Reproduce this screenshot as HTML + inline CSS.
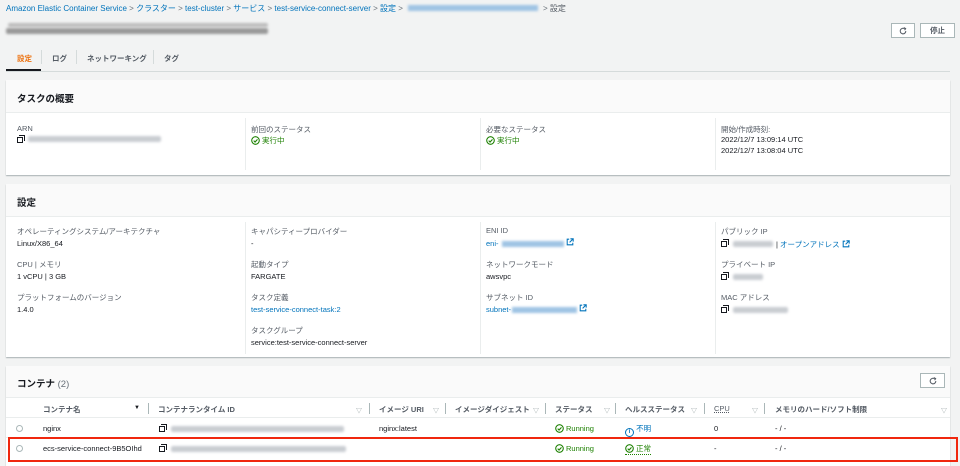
<!DOCTYPE html>
<html><head><meta charset="utf-8"><style>
*{margin:0;padding:0;box-sizing:border-box}
body{width:960px;height:464px;overflow:hidden;background:#f2f3f3;font-family:"Liberation Sans","Noto Sans CJK JP",sans-serif;font-size:7.5px;color:#16191f;position:relative}
.a{position:absolute;white-space:nowrap}
.lnk{color:#0073bb}
.lbl{color:#545b64}
.blur{position:absolute;height:6px;background:#c9cdd2;filter:blur(1.2px);border-radius:2px}
.blurb{position:absolute;height:6px;background:#9fc4e4;filter:blur(1.2px)}
.panel{position:absolute;left:6px;width:944px;background:#fff;box-shadow:0 1px 1px rgba(0,28,36,.3)}
.ph{position:absolute;left:0;top:0;width:100%;background:#fafafa;border-bottom:1px solid #eaeded}
.ph b{position:absolute;left:11px;font-size:9.5px}
.vl{position:absolute;width:1px;background:#eaeded}
.g{color:#1d8102}
.ok{display:inline-block;width:9px;height:9px;vertical-align:-2px;margin-right:2px}
.cp{display:inline-block;width:6px;height:6px;border:1.2px solid #16191f;position:relative;vertical-align:-1px}
.cp:before{content:"";position:absolute;left:1px;top:-3px;width:5px;height:5px;border-top:1.2px solid #16191f;border-right:1.2px solid #16191f}
.ext{display:inline-block;width:8px;height:8px;vertical-align:-1px;margin-left:2px}
.btn{position:absolute;border:1px solid #aab7b8;background:#fff;height:15px;font-size:7.5px;font-weight:bold;text-align:center;line-height:13px;color:#545b64}
.th{position:absolute;top:404px;font-weight:bold;color:#545b64}
.sep{position:absolute;top:403px;width:1px;height:11px;background:#aab7b8}
.tri{position:absolute;top:406px;font-size:6px;color:#879596}
.rad{position:absolute;width:7px;height:7px;border:1px solid #aab7b8;border-radius:50%}
.rf{position:absolute;left:50%;top:50%;margin:-4px 0 0 -4px;width:8px;height:8px}
</style></head><body>
<svg width="0" height="0" style="position:absolute"><defs>
<symbol id="ok" viewBox="0 0 10 10"><circle cx="5" cy="5" r="4.2" fill="none" stroke="#1d8102" stroke-width="1.2"/><path d="M3 5.2l1.5 1.5 2.7-3" fill="none" stroke="#1d8102" stroke-width="1.2"/></symbol>
<symbol id="ext" viewBox="0 0 10 10"><path d="M4 1.5H1.5v7h7V6" fill="none" stroke="#0073bb" stroke-width="1.3"/><path d="M5.5 1h3.5v3.5M9 1L4.5 5.5" fill="none" stroke="#0073bb" stroke-width="1.3"/></symbol>
<symbol id="rf" viewBox="0 0 10 10"><path d="M8.5 5A3.5 3.5 0 1 1 7 2.2" fill="none" stroke="#545b64" stroke-width="1.3"/><path d="M6 0.8L8.3 2 7 4" fill="none" stroke="#545b64" stroke-width="1.3"/></symbol>
</defs></svg>
<div class="a lnk" style="left:6px;top:3px;font-size:8px">Amazon Elastic Container Service <span style="color:#687078">&gt;</span> クラスター <span style="color:#687078">&gt;</span> test-cluster <span style="color:#687078">&gt;</span> サービス <span style="color:#687078">&gt;</span> test-service-connect-server <span style="color:#687078">&gt;</span> 設定 <span style="color:#687078">&gt;</span></div>
<div class="blurb" style="left:408px;top:5px;width:130px"></div>
<div class="a lbl" style="left:543px;top:3px;font-size:8px"><span style="color:#687078">&gt;</span> 設定</div>
<div class="blur" style="left:8px;top:23px;width:260px;height:4px;background:#bbb"></div>
<div class="blur" style="left:6px;top:28px;width:262px;height:6px;background:#999"></div>
<div class="btn" style="left:891px;top:23px;width:24px"><svg class="rf"><use href="#rf"/></svg></div>
<div class="btn" style="left:920px;top:23px;width:35px">停止</div>
<div class="a" style="left:17px;top:53px;color:#ec7211;font-weight:bold">設定</div>
<div style="position:absolute;left:6px;top:69px;width:35px;height:2px;background:#16191f"></div>
<div class="vl" style="left:41px;top:50px;height:14px;background:#d5dbdb"></div>
<div class="a lbl" style="left:52px;top:53px;font-weight:bold">ログ</div>
<div class="vl" style="left:76px;top:50px;height:14px;background:#d5dbdb"></div>
<div class="a lbl" style="left:87px;top:53px;font-weight:bold">ネットワーキング</div>
<div class="vl" style="left:153px;top:50px;height:14px;background:#d5dbdb"></div>
<div class="a lbl" style="left:164px;top:53px;font-weight:bold">タグ</div>
<div style="position:absolute;left:6px;top:71px;width:944px;height:1px;background:#d5dbdb"></div>

<div class="panel" style="top:80px;height:95px">
<div class="ph" style="height:33px"><b style="top:11px">タスクの概要</b></div>
<div class="vl" style="left:239px;top:38px;height:52px"></div>
<div class="vl" style="left:474px;top:38px;height:52px"></div>
<div class="vl" style="left:709px;top:38px;height:52px"></div>
</div>
<div class="a lbl" style="left:17px;top:124px">ARN</div>
<div class="a" style="left:17px;top:135px"><span class="cp"></span></div>
<div class="blur" style="left:28px;top:136px;width:133px"></div>
<div class="a lbl" style="left:251px;top:124px">前回のステータス</div>
<div class="a g" style="left:251px;top:135px"><svg class="ok"><use href="#ok"/></svg>実行中</div>
<div class="a lbl" style="left:486px;top:124px">必要なステータス</div>
<div class="a g" style="left:486px;top:135px"><svg class="ok"><use href="#ok"/></svg>実行中</div>
<div class="a lbl" style="left:721px;top:124px">開始/作成時刻:</div>
<div class="a" style="left:721px;top:135px">2022/12/7 13:09:14 UTC</div>
<div class="a" style="left:721px;top:146px">2022/12/7 13:08:04 UTC</div>

<div class="panel" style="top:184px;height:173px">
<div class="ph" style="height:33px"><b style="top:11px">設定</b></div>
<div class="vl" style="left:239px;top:38px;height:132px"></div>
<div class="vl" style="left:474px;top:38px;height:132px"></div>
<div class="vl" style="left:709px;top:38px;height:132px"></div>
</div>
<div class="a lbl" style="left:17px;top:226px">オペレーティングシステム/アーキテクチャ</div>
<div class="a" style="left:17px;top:239px">Linux/X86_64</div>
<div class="a lbl" style="left:17px;top:259px">CPU | メモリ</div>
<div class="a" style="left:17px;top:272px">1 vCPU | 3 GB</div>
<div class="a lbl" style="left:17px;top:292px">プラットフォームのバージョン</div>
<div class="a" style="left:17px;top:305px">1.4.0</div>
<div class="a lbl" style="left:251px;top:226px">キャパシティープロバイダー</div>
<div class="a" style="left:251px;top:239px">-</div>
<div class="a lbl" style="left:251px;top:259px">起動タイプ</div>
<div class="a" style="left:251px;top:272px">FARGATE</div>
<div class="a lbl" style="left:251px;top:292px">タスク定義</div>
<div class="a lnk" style="left:251px;top:305px">test-service-connect-task:2</div>
<div class="a lbl" style="left:251px;top:325px">タスクグループ</div>
<div class="a" style="left:251px;top:338px">service:test-service-connect-server</div>
<div class="a lbl" style="left:486px;top:226px">ENI ID</div>
<div class="a lnk" style="left:486px;top:239px">eni-</div>
<div class="blurb" style="left:502px;top:241px;width:62px"></div>
<div class="a" style="left:564px;top:238px"><svg class="ext"><use href="#ext"/></svg></div>
<div class="a lbl" style="left:486px;top:259px">ネットワークモード</div>
<div class="a" style="left:486px;top:272px">awsvpc</div>
<div class="a lbl" style="left:486px;top:292px">サブネット ID</div>
<div class="a lnk" style="left:486px;top:305px">subnet-</div>
<div class="blurb" style="left:512px;top:307px;width:65px"></div>
<div class="a" style="left:577px;top:304px"><svg class="ext"><use href="#ext"/></svg></div>
<div class="a lbl" style="left:721px;top:226px">パブリック IP</div>
<div class="a" style="left:721px;top:239px"><span class="cp"></span></div>
<div class="blur" style="left:733px;top:241px;width:40px"></div>
<div class="a lnk" style="left:776px;top:239px"><span style="color:#16191f">|</span> オープンアドレス<svg class="ext"><use href="#ext"/></svg></div>
<div class="a lbl" style="left:721px;top:259px">プライベート IP</div>
<div class="a" style="left:721px;top:272px"><span class="cp"></span></div>
<div class="blur" style="left:733px;top:274px;width:30px"></div>
<div class="a lbl" style="left:721px;top:292px">MAC アドレス</div>
<div class="a" style="left:721px;top:305px"><span class="cp"></span></div>
<div class="blur" style="left:733px;top:307px;width:55px"></div>

<div class="panel" style="top:366px;height:100px">
<div class="ph" style="height:32px"><b style="top:10px">コンテナ <span style="font-weight:normal;color:#687078">(2)</span></b></div>
<div style="position:absolute;left:0;top:51px;width:100%;height:1px;background:#eaeded"></div>
<div style="position:absolute;left:0;top:71px;width:100%;height:1px;background:#eaeded"></div>
</div>
<div class="btn" style="left:920px;top:373px;width:25px"><svg class="rf"><use href="#rf"/></svg></div>
<div class="th" style="left:43px">コンテナ名</div><div class="a" style="left:134px;top:405px;font-size:6px">▼</div><div class="sep" style="left:148px"></div>
<div class="th" style="left:158px">コンテナランタイム ID</div><div class="tri" style="left:356px">▽</div><div class="sep" style="left:369px"></div>
<div class="th" style="left:379px">イメージ URI</div><div class="tri" style="left:433px">▽</div><div class="sep" style="left:445px"></div>
<div class="th" style="left:455px">イメージダイジェスト</div><div class="tri" style="left:533px">▽</div><div class="sep" style="left:545px"></div>
<div class="th" style="left:555px">ステータス</div><div class="tri" style="left:604px">▽</div><div class="sep" style="left:615px"></div>
<div class="th" style="left:625px">ヘルスステータス</div><div class="tri" style="left:691px">▽</div><div class="sep" style="left:704px"></div>
<div class="th" style="left:714px;font-weight:normal;text-decoration:underline dotted">CPU</div><div class="tri" style="left:752px">▽</div><div class="sep" style="left:764px"></div>
<div class="th" style="left:775px">メモリのハード/ソフト制限</div><div class="tri" style="left:941px">▽</div>

<div class="rad" style="left:16px;top:425px"></div>
<div class="a" style="left:43px;top:424px">nginx</div>
<div class="a" style="left:159px;top:424px"><span class="cp"></span></div>
<div class="blur" style="left:171px;top:426px;width:173px"></div>
<div class="a" style="left:379px;top:424px">nginx:latest</div>
<div class="a g" style="left:555px;top:424px"><svg class="ok"><use href="#ok"/></svg>Running</div>
<div class="a lnk" style="left:625px;top:423px;border-bottom:1px dotted #0073bb"><span style="display:inline-block;width:9px;height:9px;border:1.2px solid #0073bb;border-radius:50%;font-size:6px;line-height:7px;text-align:center;vertical-align:-2px;font-weight:bold">i</span> 不明</div>
<div class="a" style="left:714px;top:424px">0</div>
<div class="a" style="left:775px;top:424px">- / -</div>

<div class="rad" style="left:16px;top:445px"></div>
<div class="a" style="left:43px;top:444px">ecs-service-connect-9B5OIhd</div>
<div class="a" style="left:159px;top:444px"><span class="cp"></span></div>
<div class="blur" style="left:171px;top:446px;width:175px"></div>
<div class="a g" style="left:555px;top:444px"><svg class="ok"><use href="#ok"/></svg>Running</div>
<div class="a g" style="left:625px;top:443px;border-bottom:1px dotted #1d8102"><svg class="ok"><use href="#ok"/></svg>正常</div>
<div class="a" style="left:714px;top:444px">-</div>
<div class="a" style="left:775px;top:444px">- / -</div>
<div style="position:absolute;left:8px;top:437px;width:950px;height:25px;border:2.5px solid #f0270e"></div>
</body></html>
